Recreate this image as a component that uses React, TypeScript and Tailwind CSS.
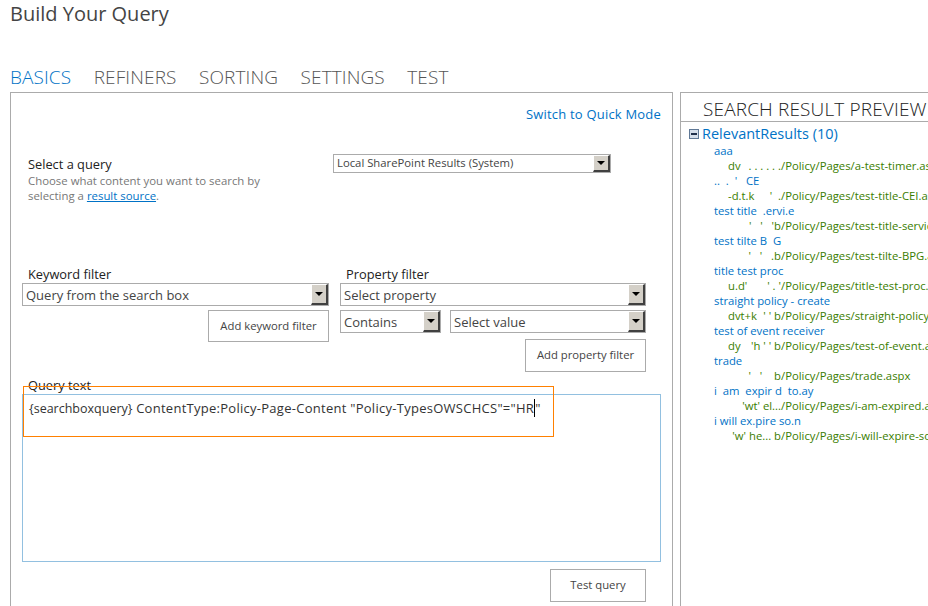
const font = "[font-family:'Open_Sans','Noto_Sans',sans-serif]";

const results = [
  { title: "aaa", left: "dv", right: ". . . . . .", path: "/Policy/Pages/a-test-timer.aspx" },
  { title: "..  .  '   CE", left: "-d.t.k", right: "'  .", path: "/Policy/Pages/test-title-CEI.aspx" },
  { title: "test title  .ervi.e", left: "", right: "'   '   'b", path: "/Policy/Pages/test-title-service.aspx" },
  { title: "test tilte B  G", left: "", right: "'   '   .b", path: "/Policy/Pages/test-tilte-BPG.aspx" },
  { title: "title test proc", left: "u.d'", right: "' . '", path: "/Policy/Pages/title-test-proc.aspx" },
  { title: "straight policy - create", left: "dvt+k", right: "' ' b", path: "/Policy/Pages/straight-policy.aspx" },
  { title: "test of event receiver", left: "dy", right: "'h ' ' b", path: "/Policy/Pages/test-of-event.aspx" },
  { title: "trade", left: "", right: "'   '    b", path: "/Policy/Pages/trade.aspx" },
  { title: "i  am  expir d  to.ay", left: "", right: "'wt' el...", path: "/Policy/Pages/i-am-expired.aspx" },
  { title: "i will ex.pire so.n", left: "", right: "'w' he... b", path: "/Policy/Pages/i-will-expire-soon.aspx" },
];

function Arrow() {
  return (
    <div className="w-[17px] shrink-0 self-stretch bg-[#d4d0c8] border-t border-l border-white border-r-2 border-b-2 border-r-[#404040] border-b-[#404040] flex items-center justify-center">
      <div className="w-0 h-0 border-x-[4px] border-x-transparent border-t-[4px] border-t-black" />
    </div>
  );
}

function Select({ label, className }: { label: string; className: string }) {
  return (
    <div className={`flex border border-[#ababab] bg-white text-[#444] ${className}`}>
      <div className="flex-1 pl-[3px] whitespace-nowrap overflow-hidden">{label}</div>
      <Arrow />
    </div>
  );
}

function Button({ label, className }: { label: string; className: string }) {
  return (
    <div className={`border border-[#ababab] bg-white text-[#444] flex items-center justify-center ${className}`}>
      {label}
    </div>
  );
}

export default function App() {
  return (
    <div className={`${font} h-[606px] w-[928px] overflow-hidden bg-white pl-[10px]`}>
      <h1 className="text-[20px] leading-[28px] text-[#444] h-[65px]">Build Your Query</h1>

      <div className="flex gap-[22.5px] font-light text-[19px] tracking-[0.1px] leading-[24px] text-[#555] h-[27px]">
        <span className="text-[#0072c6]">BASICS</span>
        <span>REFINERS</span>
        <span>SORTING</span>
        <span>SETTINGS</span>
        <span>TEST</span>
      </div>

      <div className="flex gap-[7px] h-[514px]">
        <div className="relative w-[663px] shrink-0 h-[530px] border border-[#ababab] px-[11px] pt-[12px]">
          <div className="text-right text-[13px] tracking-[0.2px] leading-[18px] text-[#0072c6] h-[49px]">Switch to Quick Mode</div>

          <div className="flex h-[111px]">
            <div className="w-[311px] pl-[6px] pt-px">
              <div className="text-[12.8px] leading-[18px] text-[#222]">Select a query</div>
              <div className="text-[11.4px] leading-[15px] text-[#777]">
                Choose what content you want to search by
                <br />
                selecting a <span className="text-[#0072c6] underline">result source</span>.
              </div>
            </div>
            <Select label="Local SharePoint Results (System)" className="w-[278px] h-[19px] text-[11.3px] leading-[16px]" />
          </div>

          <div className="flex h-[111px] gap-[11px]">
            <div className="w-[307px]">
              <div className="pl-[6px] text-[12.8px] leading-[18px] text-[#222]">Keyword filter</div>
              <Select label="Query from the search box" className="h-[23px] text-[13px] leading-[22px]" />
              <div className="flex justify-end mt-[4px]">
                <Button label="Add keyword filter" className="w-[121px] h-[32px] text-[11.3px]" />
              </div>
            </div>
            <div className="w-[306px]">
              <div className="pl-[6px] text-[12.8px] leading-[18px] text-[#222]">Property filter</div>
              <Select label="Select property" className="h-[23px] text-[13px] leading-[22px]" />
              <div className="flex gap-[9px] mt-[4px]">
                <Select label="Contains" className="w-[101px] h-[23px] text-[13px] leading-[22px]" />
                <Select label="Select value" className="flex-1 h-[23px] text-[13px] leading-[22px]" />
              </div>
              <div className="flex justify-end mt-[6px]">
                <Button label="Add property filter" className="w-[121px] h-[33px] text-[11.3px]" />
              </div>
            </div>
          </div>

          <div className="pl-[6px] text-[12.8px] leading-[18px] text-[#222]">Query text</div>
          <div className="h-[168px] border border-[#92c0e0] pl-[6px] pt-[4px] text-[13px] tracking-[0.27px] leading-[18px] text-[#333] whitespace-nowrap">
            <span className="text-[12.5px] tracking-normal">{"{searchboxquery}"}</span>
            {' ContentType:Policy-Page-Content "Policy-TypesOWSCHCS"="HR'}
            <span className="border-l border-black">"</span>
          </div>
          <div className="flex justify-end mt-[7px] pr-[15px]">
            <Button label="Test query" className="w-[96px] h-[33px] text-[11.3px]" />
          </div>

          <div className="absolute left-[12px] top-[293px] w-[531px] h-[51px] border border-[#ff8000]" />
        </div>

        <div className="flex-1 h-[530px] border border-[#ababab] border-r-0 overflow-hidden">
          <div className="h-[29px] border-b border-[#ababab] pl-[22px] font-light text-[19px] tracking-[0.15px] leading-[32px] text-[#222] whitespace-nowrap">
            SEARCH RESULT PREVIEW
          </div>
          <div className="flex items-center gap-[3px] pl-[8px] mt-[3px] h-[18px]">
            <svg width="10" height="10" viewBox="0 0 10 10" className="shrink-0">
              <rect x="0.5" y="0.5" width="9" height="9" fill="#d5deea" stroke="#5f7896" />
              <rect x="2" y="4" width="6" height="2" fill="#1f2f4a" />
            </svg>
            <span className="text-[14.5px] text-[#0072c6]">RelevantResults (10)</span>
          </div>
          <div className="pl-[33px] text-[11.3px] leading-[15px] whitespace-nowrap">
            {results.map((r) => (
              <div key={r.path}>
                <div className="text-[#0072c6] whitespace-pre">{r.title}</div>
                <div className="flex pl-[14px] text-[#3a7d00]">
                  <span className="w-[53px] shrink-0 flex justify-between whitespace-pre">
                    <span>{r.left}</span>
                    <span>{r.right}</span>
                  </span>
                  <span>{r.path}</span>
                </div>
              </div>
            ))}
          </div>
        </div>
      </div>
    </div>
  );
}
